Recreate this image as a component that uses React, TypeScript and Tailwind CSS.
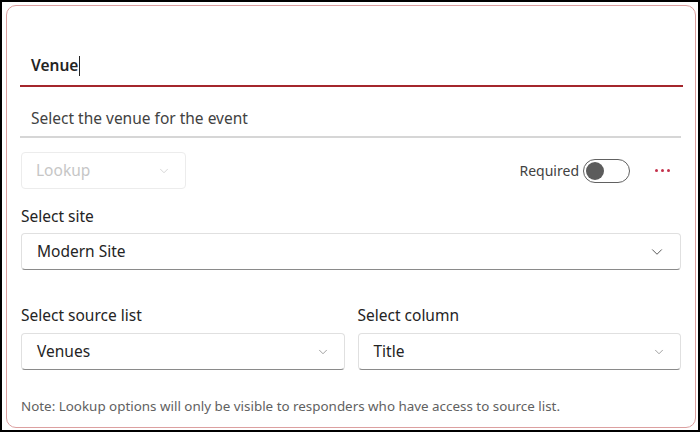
import { ChevronDown } from 'lucide-react';

const font = { fontFamily: '"Noto Sans", "Open Sans", sans-serif' };

function Dropdown({ value, small }: { value: string; small?: boolean }) {
  return (
    <div className="flex h-[37px] items-center justify-between rounded-[4px] border border-[#e0e0e0] border-b-[#8a8a8a] bg-white pl-[15px] pr-[14px]">
      <span className="text-[15.5px] text-[#242424]">{value}</span>
      {small ? (
        <ChevronDown className="h-[14px] w-[14px] text-[#7a7a7a]" strokeWidth={1.2} />
      ) : (
        <ChevronDown className="h-[18px] w-[18px] text-[#555]" strokeWidth={1.3} />
      )}
    </div>
  );
}

export default function App() {
  return (
    <div className="h-[432px] w-[700px] border-2 border-black bg-white pb-[2px] pl-[4px] pr-[2px] pt-[3px]" style={font}>
      <div className="flex h-full flex-col rounded-[10px] border border-[#dca0a0] pl-[14px] pr-[14px]">
        {/* title */}
        <div className="-ml-px -mr-[2px] mt-[41px] flex h-[40px] items-center border-b-2 border-[#a4262c] pl-[11px]">
          <span className="text-[15.5px] font-semibold text-[#242424]">Venue</span>
          <span className="ml-px h-[20px] w-px bg-[#242424]" />
        </div>

        {/* description */}
        <div className="-ml-px flex h-[36px] mt-[15px] items-center border-b-2 border-[#d6d6d6] pl-[11px]">
          <span className="text-[15.5px] text-[#424242]">Select the venue for the event</span>
        </div>

        {/* type row */}
        <div className="mt-[14px] flex h-[37px] items-center justify-between">
          <div className="flex h-[37px] w-[165px] items-center justify-between rounded-[4px] border border-[#ececec] pl-[14px] pr-[14px]">
            <span className="text-[15.5px] text-[#c6c6c6]">Lookup</span>
            <ChevronDown className="h-[14px] w-[14px] text-[#c6c6c6]" strokeWidth={1.2} />
          </div>
          <div className="flex items-center">
            <span className="mr-[4px] text-[14px] text-[#424242]">Required</span>
            <div className="flex h-[24px] w-[47px] items-center rounded-full border border-[#616161] pl-[2px]">
              <div className="h-[18px] w-[18px] rounded-full bg-[#5c5c5c]" />
            </div>
            <div className="ml-[25px] mr-[11px] flex gap-[3px]">
              <span className="h-[3px] w-[3px] rounded-full bg-[#c4314b]" />
              <span className="h-[3px] w-[3px] rounded-full bg-[#c4314b]" />
              <span className="h-[3px] w-[3px] rounded-full bg-[#c4314b]" />
            </div>
          </div>
        </div>

        {/* site */}
        <div className="mt-[17px] text-[15.5px] leading-[20px] text-[#242424]">Select site</div>
        <div className="mt-[7px]">
          <Dropdown value="Modern Site" />
        </div>

        {/* source list + column */}
        <div className="mt-[35px] grid grid-cols-2 gap-[13px]">
          <div>
            <div className="text-[15.5px] leading-[20px] text-[#242424]">Select source list</div>
            <div className="mt-[8px]">
              <Dropdown value="Venues" small />
            </div>
          </div>
          <div>
            <div className="text-[15.5px] leading-[20px] text-[#242424]">Select column</div>
            <div className="mt-[8px]">
              <Dropdown value="Title" small />
            </div>
          </div>
        </div>

        <div className="mt-[26px] text-[13.4px] text-[#616161]">
          Note: Lookup options will only be visible to responders who have access to source list.
        </div>
      </div>
    </div>
  );
}
